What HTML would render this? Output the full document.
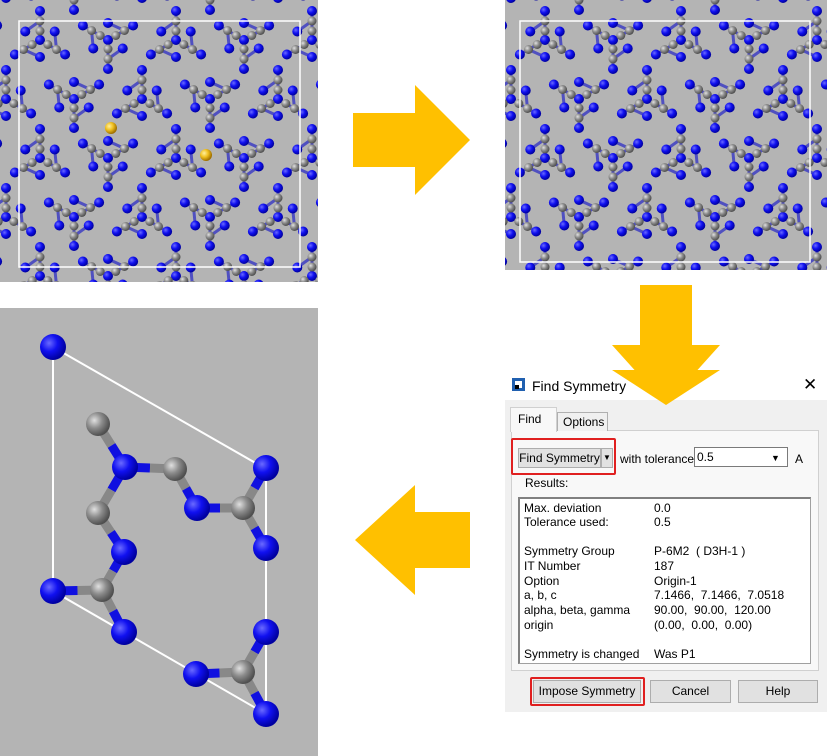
<!DOCTYPE html>
<html><head><meta charset="utf-8">
<style>
body{margin:0;width:827px;height:756px;background:#fff;position:relative;overflow:hidden;font-family:"Liberation Sans",sans-serif;}
.a{position:absolute;}
.t{position:absolute;font-size:12px;color:#000;white-space:nowrap;line-height:14px;}
.btn{position:absolute;background:#e1e1e1;border:1px solid #adadad;font-size:12px;text-align:center;box-sizing:border-box;}
</style></head><body>
<svg class="a" style="left:0;top:0" width="827" height="756" id="s">
<defs>
<radialGradient id="gb" cx="35%" cy="35%" r="65%"><stop offset="0" stop-color="#6a6aff"/><stop offset=".5" stop-color="#1010f0"/><stop offset="1" stop-color="#0000a0"/></radialGradient>
<radialGradient id="gg" cx="35%" cy="35%" r="65%"><stop offset="0" stop-color="#e0e0e0"/><stop offset=".5" stop-color="#8c8c8c"/><stop offset="1" stop-color="#505050"/></radialGradient>
<radialGradient id="gy" cx="35%" cy="35%" r="65%"><stop offset="0" stop-color="#fff0a0"/><stop offset=".5" stop-color="#f0c020"/><stop offset="1" stop-color="#a07000"/></radialGradient>
<clipPath id="c1"><rect x="0" y="0" width="318" height="282"/></clipPath>
<clipPath id="c2"><rect x="505" y="0" width="322" height="270"/></clipPath>
</defs>
<rect x="0" y="0" width="318" height="282" fill="#b4b4b4"/>
<rect x="505" y="0" width="322" height="270" fill="#b4b4b4"/>
<rect x="0" y="308" width="318" height="448" fill="#b4b4b4"/>
<g id="tl" clip-path="url(#c1)"></g><g id="tr" clip-path="url(#c2)"></g><g id="bl"></g>
<rect x="19" y="21" width="281" height="246" fill="none" stroke="#fff" stroke-width="1.5"/>
<rect x="520" y="21" width="290" height="241" fill="none" stroke="#fff" stroke-width="1.5"/>
<circle cx="111" cy="128" r="6" fill="url(#gy)"/>
<circle cx="206" cy="155" r="6" fill="url(#gy)"/>
<polygon points="353,113 415,113 415,85 470,140 415,195 415,167 353,167" fill="#ffc000"/>
<polygon points="640,285 692,285 692,345 720,345 666,405 612,345 640,345" fill="#ffc000"/>
<polygon points="470,512 415,512 415,485 355,540 415,595 415,568 470,568" fill="#ffc000"/>
</svg>

<div class="a" style="left:505px;top:372px;width:322px;height:340px;background:#f0f0f0;"></div>
<div class="a" style="left:505px;top:372px;width:322px;height:28px;background:#fff;"></div>
<svg class="a" style="left:505px;top:370px" width="322" height="36"><polygon points="107,0 215,0 161,35" fill="#ffc000"/></svg>
<div class="a" style="left:512px;top:378px;width:13px;height:13px;background:#2060b0;"></div>
<div class="a" style="left:515px;top:381px;width:7px;height:7px;background:#fff;"></div>
<div class="a" style="left:515px;top:385px;width:4px;height:4px;background:#000;"></div>
<div class="t" style="left:532px;top:378px;font-size:14px;line-height:16px;">Find Symmetry</div>
<div class="t" style="left:803px;top:376px;font-size:17px;line-height:18px;">✕</div>
<div class="a" style="left:511px;top:430px;width:308px;height:241px;border:1px solid #d0d0d0;background:#f8f8f8;box-sizing:border-box;"></div>
<div class="a" style="left:510px;top:407px;width:45px;height:24px;border:1px solid #d0d0d0;border-bottom:none;background:#f8f8f8;"></div>
<div class="t" style="left:518px;top:412px;">Find</div>
<div class="a" style="left:557px;top:412px;width:49px;height:18px;border:1px solid #b0b0b0;border-bottom:none;background:#f0f0f0;"></div>
<div class="t" style="left:563px;top:415px;">Options</div>
<div class="a" style="left:511px;top:438px;width:105px;height:37px;border:2px solid #e02020;border-radius:2px;box-sizing:border-box;"></div>
<div class="btn" style="left:518px;top:448px;width:83px;height:20px;line-height:18px;">Find Symmetry</div>
<div class="btn" style="left:601px;top:448px;width:12px;height:20px;line-height:18px;font-size:8px;">▼</div>
<div class="t" style="left:620px;top:452px;">with tolerance</div>
<div class="a" style="left:694px;top:447px;width:94px;height:20px;border:1px solid #7a7a7a;background:#fff;box-sizing:border-box;"></div>
<div class="t" style="left:697px;top:450px;">0.5</div>
<div class="t" style="left:771px;top:451px;font-size:9px;">▼</div>
<div class="t" style="left:795px;top:452px;">A</div>
<div class="t" style="left:525px;top:476px;">Results:</div>
<div class="a" style="left:518px;top:497px;width:293px;height:167px;background:#fff;border:1px solid #a0a0a0;border-top:2px solid #808080;border-left:2px solid #808080;box-sizing:border-box;"></div>
<div class="t" style="left:524px;top:501px;">Max. deviation</div><div class="t" style="left:654px;top:501px;">0.0</div>
<div class="t" style="left:524px;top:515px;">Tolerance used:</div><div class="t" style="left:654px;top:515px;">0.5</div>
<div class="t" style="left:524px;top:544px;">Symmetry Group</div><div class="t" style="left:654px;top:544px;">P-6M2&nbsp; ( D3H-1 )</div>
<div class="t" style="left:524px;top:559px;">IT Number</div><div class="t" style="left:654px;top:559px;">187</div>
<div class="t" style="left:524px;top:574px;">Option</div><div class="t" style="left:654px;top:574px;">Origin-1</div>
<div class="t" style="left:524px;top:588px;">a, b, c</div><div class="t" style="left:654px;top:588px;">7.1466,&nbsp; 7.1466,&nbsp; 7.0518</div>
<div class="t" style="left:524px;top:603px;">alpha, beta, gamma</div><div class="t" style="left:654px;top:603px;">90.00,&nbsp; 90.00,&nbsp; 120.00</div>
<div class="t" style="left:524px;top:618px;">origin</div><div class="t" style="left:654px;top:618px;">(0.00,&nbsp; 0.00,&nbsp; 0.00)</div>
<div class="t" style="left:524px;top:647px;">Symmetry is changed</div><div class="t" style="left:654px;top:647px;">Was P1</div>
<div class="a" style="left:530px;top:677px;width:115px;height:29px;border:2px solid #e02020;border-radius:2px;box-sizing:border-box;"></div>
<div class="btn" style="left:533px;top:680px;width:108px;height:23px;line-height:21px;">Impose Symmetry</div>
<div class="btn" style="left:650px;top:680px;width:81px;height:23px;line-height:21px;">Cancel</div>
<div class="btn" style="left:738px;top:680px;width:80px;height:23px;line-height:21px;">Help</div>

<script>
var NS="http://www.w3.org/2000/svg";
function el(g,t,a){var e=document.createElementNS(NS,t);for(var k in a)e.setAttribute(k,a[k]);g.appendChild(e);return e;}
function lattice(gid,ox,oy){
 var g=document.getElementById(gid);
 var atoms=[],bonds=[];
 var sx=68,sy=59;
 for(var j=-1;j<7;j++)for(var i=-1;i<7;i++){
  var cx=ox+i*sx+(j%2?sx/2:0), cy=oy+j*sy;
  var f=((i+j)%2===0)?1:-1;
  atoms.push([cx,cy,'b']);
  for(var k=0;k<3;k++){
   var a=(90*f+120*k)*Math.PI/180;
   var a2=a+Math.PI/3;
   var c=[cx+9*Math.cos(a2),cy+9*Math.sin(a2),'g'];
   var n=[cx+17*Math.cos(a),cy+17*Math.sin(a),'b'];
   var c2=[cx+19*Math.cos(a2),cy+19*Math.sin(a2),'g'];
   var nb=[cx+29*Math.cos(a2),cy+29*Math.sin(a2),'b'];
   atoms.push(c,n,c2,nb);
   bonds.push([cx,cy,c[0],c[1]],[c[0],c[1],nb[0],nb[1]],[c2[0],c2[1],n[0],n[1]]);
  }
 }
 bonds.forEach(function(b){el(g,'line',{x1:b[0],y1:b[1],x2:b[2],y2:b[3],stroke:'#5050c0','stroke-width':3});});
 atoms.forEach(function(p){el(g,'circle',{cx:p[0],cy:p[1],r:p[2]=='b'?5:4.5,fill:p[2]=='b'?'url(#gb)':'url(#gg)'});});
}
lattice('tl',40,40);
lattice('tr',545,40);
var bl=document.getElementById('bl');
var P={a:[98,424],b:[125,467],c:[175,469],d:[197,508],e:[243,508],f:[266,468],h:[266,548],i:[98,513],j:[124,552],k:[102,590],l:[53,591],m:[124,632],n:[266,632],o:[243,672],p:[196,674],q:[266,714],r:[53,347]};
var gr='acegiko';
[['a','b'],['b','c'],['b','i'],['c','d'],['d','e'],['e','f'],['e','h'],['i','j'],['j','k'],['k','l'],['k','m'],['n','o'],['o','p'],['o','q']].forEach(function(b){var A=P[b[0]],B=P[b[1]];var mx=(A[0]+B[0])/2,my=(A[1]+B[1])/2;
 el(bl,'line',{x1:A[0],y1:A[1],x2:mx,y2:my,stroke:gr.indexOf(b[0])>=0?'#888':'#1010e0','stroke-width':9});
 el(bl,'line',{x1:mx,y1:my,x2:B[0],y2:B[1],stroke:gr.indexOf(b[1])>=0?'#888':'#1010e0','stroke-width':9});});
el(bl,'polygon',{points:'53,347 266,469 266,714 53,591',fill:'none',stroke:'#fff','stroke-width':2});
for(var k in P){var g=gr.indexOf(k)>=0;el(bl,'circle',{cx:P[k][0],cy:P[k][1],r:g?12:13,fill:g?'url(#gg)':'url(#gb)'});}
</script>
</body></html>
